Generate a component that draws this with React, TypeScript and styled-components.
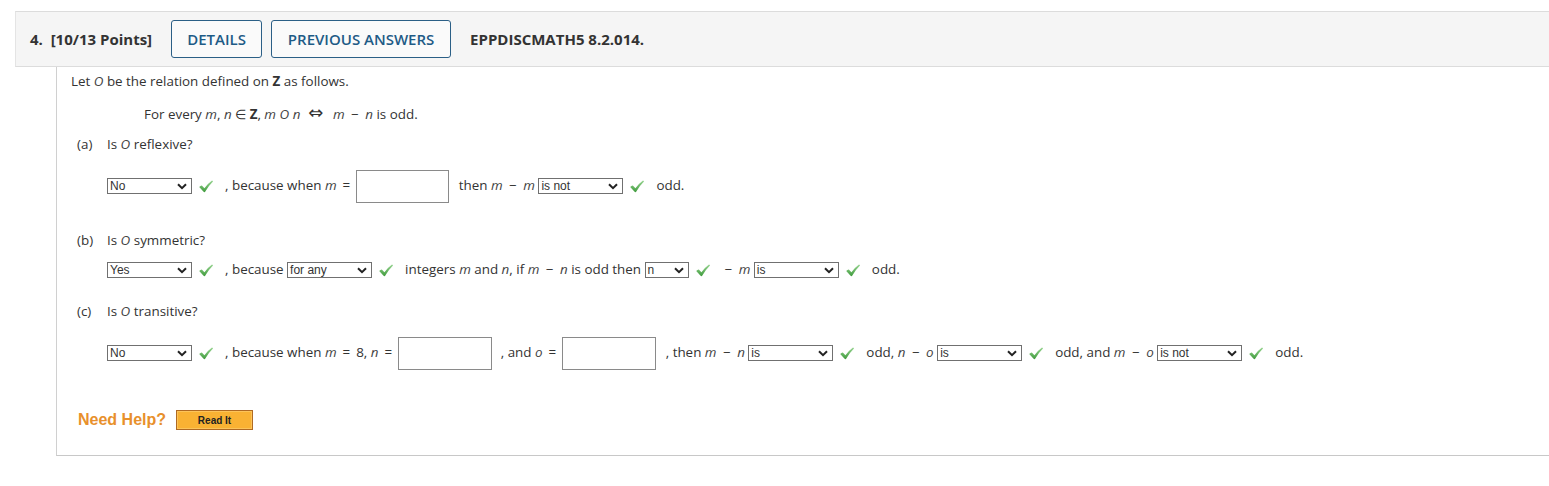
import React from "react";
import styled, { createGlobalStyle } from "styled-components";

const Global = createGlobalStyle`
  html, body { margin: 0; padding: 0; background: #fff; }
  body { font-family: "Open Sans", "Liberation Sans", sans-serif; color: #333; }
`;

const Page = styled.div`
  padding-top: 11px;
  padding-left: 15px;
  width: 1549px;
  box-sizing: border-box;
`;

const Header = styled.div`
  display: flex;
  align-items: center;
  height: 56px;
  box-sizing: border-box;
  background: #f5f5f5;
  border-top: 1px solid #dcdcdc;
  border-bottom: 1px solid #dcdcdc;
  border-left: 1px solid #e4e4e4;
  padding-left: 14px;
`;

const QNum = styled.span`
  font-weight: 700;
  font-size: 15px;
  color: #333;
  margin-right: 19px;
`;

const HeadButton = styled.div<{ w: number }>`
  height: 38px;
  box-sizing: border-box;
  border: 1px solid #2b5f86;
  border-radius: 3px;
  display: flex;
  align-items: center;
  justify-content: center;
  color: #1e5b86;
  font-size: 15px;
  font-weight: 600;
  background: #fafafa;
  margin-right: 9px;
  width: ${(p) => p.w}px;
`;

const Code = styled.span`
  font-weight: 700;
  font-size: 15px;
  color: #333;
  margin-left: 10px;
`;

const Body = styled.div`
  margin-left: 41px;
  border-left: 1px solid #d0d0d0;
  border-bottom: 1px solid #c8c8c8;
  height: 389px;
  box-sizing: border-box;
  padding-left: 14px;
  padding-top: 5px;
  font-size: 13.4px;
  color: #333;
`;

const Line = styled.div<{ indent?: number; top?: number }>`
  white-space: pre;
  padding-left: ${(p) => p.indent ?? 0}px;
  margin-top: ${(p) => p.top ?? 0}px;
  height: 18px;
  line-height: 18px;
`;

const Part = styled.span`
  display: inline-block;
  width: 30px;
  padding-left: 6px;
`;

const Row = styled.div<{ top: number }>`
  padding-left: 36px;
  margin-top: ${(p) => p.top}px;
  height: 34px;
  line-height: 34px;
  white-space: pre;
`;

const M = styled.i`
  font-style: italic;
  color: #444;
`;

const B = styled.b`
  font-weight: 700;
`;

const Op = styled.span`
  padding: 0 3px;
`;

const Eq = styled.span`
  padding: 0 2.5px;
`;

const Arrow = styled.span`
  font-family: "DejaVu Sans", sans-serif;
  font-size: 18px;
  line-height: 10px;
  margin: 0 6px 0 8px;
`;

const SelectBox = styled.span<{ w: number }>`
  display: inline-flex;
  vertical-align: middle;
  width: ${(p) => p.w}px;
  height: 16px;
  box-sizing: border-box;
  border: 1px solid #707070;
  align-items: center;
  justify-content: space-between;
  padding: 0 4px 0 2px;
  font-family: "Liberation Sans", Arial, sans-serif;
  font-size: 12px;
  line-height: 14px;
  color: #333;
  background: #fff;
`;

const Input = styled.span<{ w: number; l: number; r: number }>`
  display: inline-block;
  vertical-align: middle;
  width: ${(p) => p.w}px;
  height: 33px;
  margin-left: ${(p) => p.l}px;
  margin-right: ${(p) => p.r}px;
  box-sizing: border-box;
  border: 1px solid #8a8a8a;
  background: #fff;
`;

const CheckWrap = styled.span`
  display: inline-block;
  vertical-align: middle;
  width: 16px;
  height: 16px;
  margin-left: 6px;
  margin-right: 11px;
  line-height: 0;
`;

const HelpRow = styled.div`
  display: flex;
  align-items: center;
  margin-top: 41px;
  padding-left: 7px;
`;

const HelpText = styled.span`
  font-family: "Liberation Sans", Arial, sans-serif;
  font-weight: 700;
  font-size: 16px;
  color: #e8902c;
  margin-right: 10px;
`;

const ReadIt = styled.div`
  width: 77px;
  height: 20px;
  box-sizing: border-box;
  border: 1px solid #b06a22;
  background: #f9b233;
  box-shadow: inset 0 0 0 1px #fcc45a;
  display: flex;
  align-items: center;
  justify-content: center;
  font-family: "Liberation Sans", Arial, sans-serif;
  font-weight: 700;
  font-size: 10px;
  color: #222;
`;

const Chevron = () => (
  <svg width="10" height="7" viewBox="0 0 10 7">
    <path d="M1 1.2 L5 5.2 L9 1.2" fill="none" stroke="#222" strokeWidth="2" />
  </svg>
);

const Sel = ({ w, v }: { w: number; v: string }) => (
  <SelectBox w={w}>
    <span>{v}</span>
    <Chevron />
  </SelectBox>
);

const Check = () => (
  <CheckWrap>
    <svg width="16" height="16" viewBox="0 0 16 16">
      <defs>
        <linearGradient id="cg" x1="0" y1="0" x2="0" y2="1">
          <stop offset="0" stopColor="#9ad694" />
          <stop offset="1" stopColor="#3f9b3c" />
        </linearGradient>
      </defs>
      <path
        d="M1.2 9 Q2.4 7.6 3.8 7.4 L6.4 10.2 Q9.6 5.6 14 2.4 Q15 2.6 15 3.6 Q10.4 8 7 14 Q6.2 14.4 5.6 13.8 Z"
        fill="url(#cg)"
      />
    </svg>
  </CheckWrap>
);

const Minus = () => <Op>{"\u2212"}</Op>;
const Equals = () => <Eq>=</Eq>;

export default function App() {
  return (
    <>
      <Global />
      <Page>
        <Header>
          <QNum>4.&nbsp; [10/13 Points]</QNum>
          <HeadButton w={91}>DETAILS</HeadButton>
          <HeadButton w={180}>PREVIOUS ANSWERS</HeadButton>
          <Code>EPPDISCMATH5 8.2.014.</Code>
        </Header>
        <Body>
          <Line>
            Let <M>O</M> be the relation defined on <B>Z</B> as follows.
          </Line>
          <Line indent={73} top={15}>
            For every <M>m</M>, <M>n</M> ∈ <B>Z</B>, <M>m</M> <M>O</M> <M>n</M><Arrow>⇔</Arrow> <M>m</M> <Minus /> <M>n</M> is odd.
          </Line>
          <Line top={12}>
            <Part>(a)</Part>Is <M>O</M> reflexive?
          </Line>
          <Row top={15}>
            <Sel w={85} v="No" />
            <Check />
            , because when <M>m</M> <Equals />
            <Input w={93} l={3} r={10} />
            then <M>m</M> <Minus /> <M>m</M> <Sel w={85} v="is not" />
            <Check />
            odd.
          </Row>
          <Line top={29}>
            <Part>(b)</Part>Is <M>O</M> symmetric?
          </Line>
          <Row top={3}>
            <Sel w={85} v="Yes" />
            <Check />
            , because <Sel w={85} v="for any" />
            <Check />
            integers <M>m</M> and <M>n</M>, if <M>m</M> <Minus /> <M>n</M> is odd then <Sel w={44} v="n" />
            <Check />
            <Minus /> <M>m</M> <Sel w={85} v="is" />
            <Check />
            odd.
          </Row>
          <Line top={16}>
            <Part>(c)</Part>Is <M>O</M> transitive?
          </Line>
          <Row top={15}>
            <Sel w={85} v="No" />
            <Check />
            , because when <M>m</M> <Equals /> 8, <M>n</M> <Equals />
            <Input w={94} l={3} r={9} />
            , and <M>o</M> <Equals />
            <Input w={94} l={3} r={10} />
            , then <M>m</M> <Minus /> <M>n</M> <Sel w={85} v="is" />
            <Check />
            odd, <M>n</M> <Minus /> <M>o</M> <Sel w={85} v="is" />
            <Check />
            odd, and <M>m</M> <Minus /> <M>o</M> <Sel w={85} v="is not" />
            <Check />
            odd.
          </Row>
          <HelpRow>
            <HelpText>Need Help?</HelpText>
            <ReadIt>Read It</ReadIt>
          </HelpRow>
        </Body>
      </Page>
    </>
  );
}
